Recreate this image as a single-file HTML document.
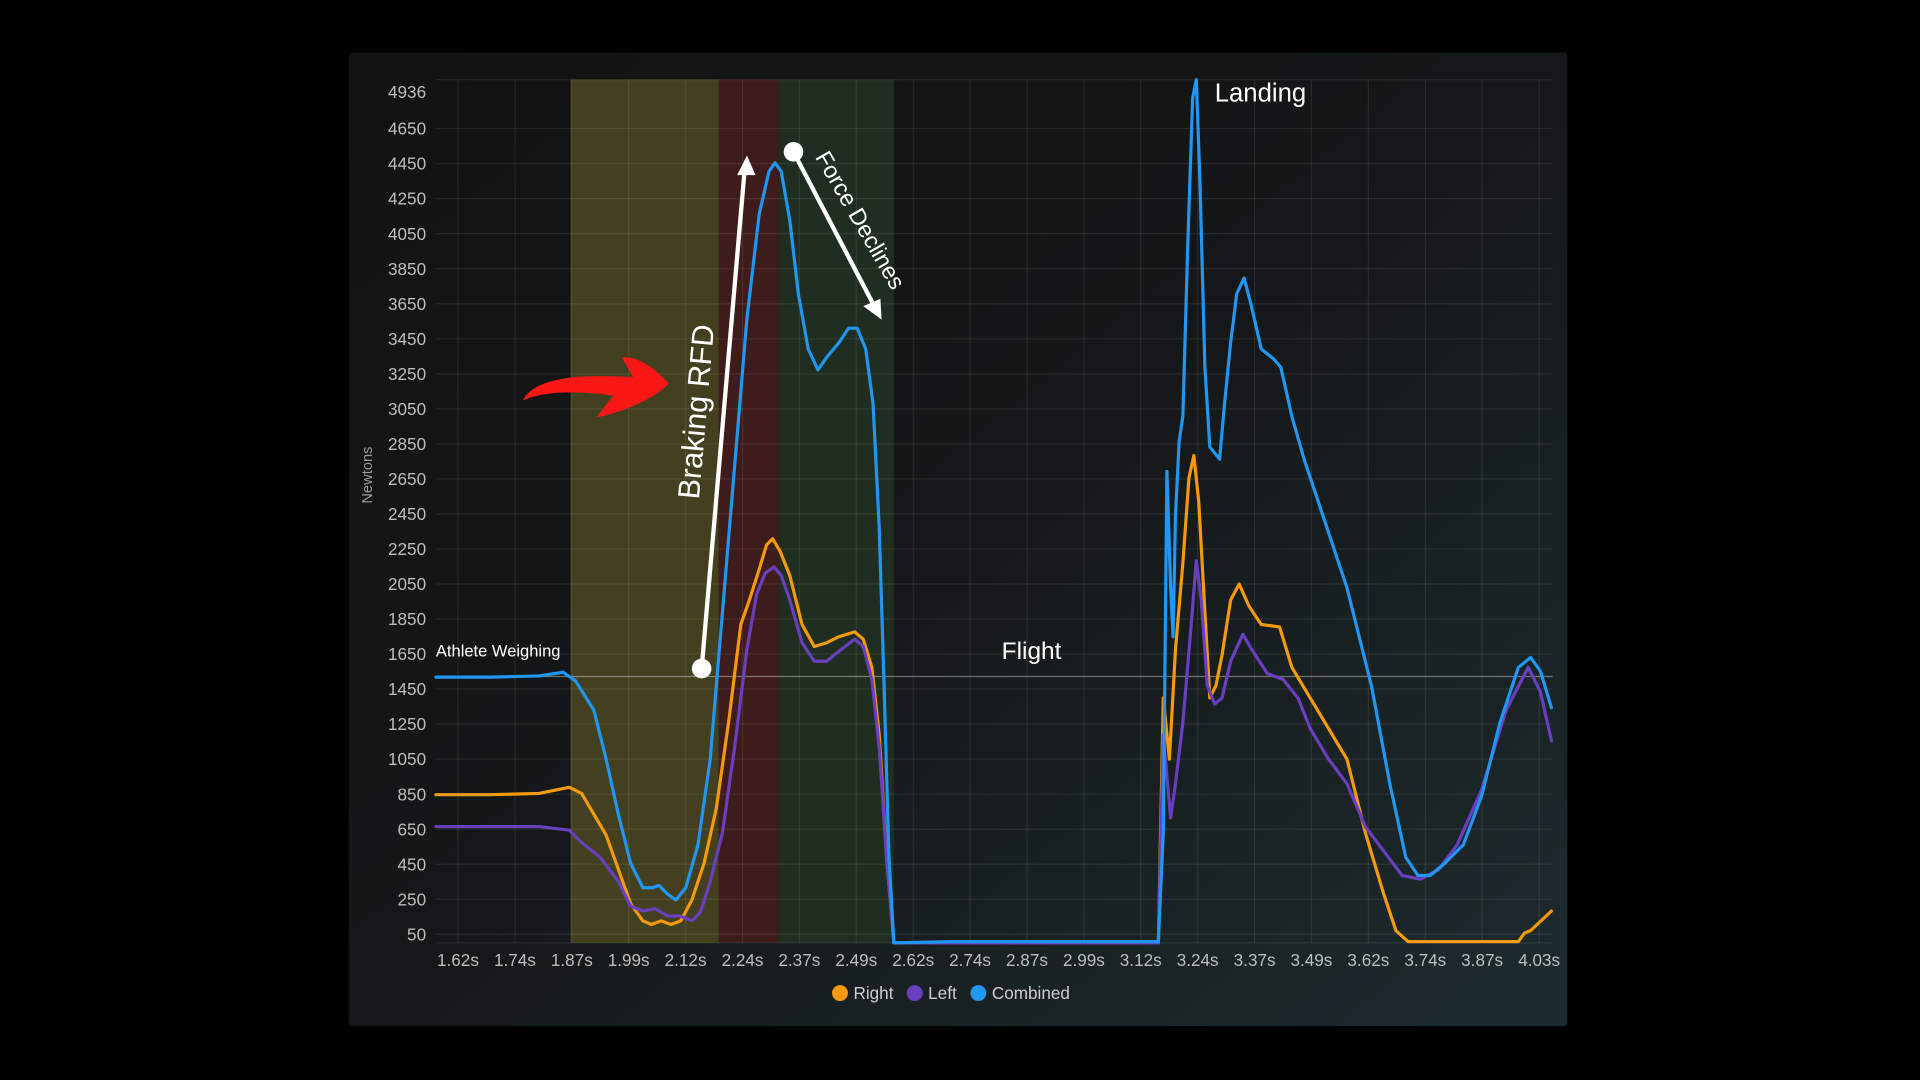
<!DOCTYPE html>
<html><head><meta charset="utf-8"><style>
html,body{margin:0;padding:0;background:#000;width:1920px;height:1080px;overflow:hidden}
svg{display:block}
text{font-family:"Liberation Sans",sans-serif}
</style></head><body>
<svg width="1920" height="1080" viewBox="0 0 1568 882" preserveAspectRatio="none" xmlns="http://www.w3.org/2000/svg">
<defs>
<linearGradient id="bg" x1="0" y1="0" x2="1" y2="1">
<stop offset="0" stop-color="#121212"/><stop offset="0.5" stop-color="#151818"/><stop offset="1" stop-color="#1d2b2f"/>
</linearGradient>
</defs>
<rect x="0" y="0" width="1568" height="882" fill="#000"/>
<rect x="285" y="43" width="995" height="795" rx="3" fill="url(#bg)"/>
<!-- bands -->
<rect x="466" y="65" width="121" height="705" fill="#43401f"/>
<rect x="587" y="65" width="49" height="705" fill="#3f1c1c"/>
<rect x="636" y="65" width="94" height="705" fill="#1f2e20"/>
<!-- grid -->
<g stroke="rgba(255,255,255,0.08)" stroke-width="1">
<line x1="356" y1="65" x2="1268" y2="65"/>
<line x1="356" y1="105" x2="1268" y2="105"/><line x1="356" y1="133.6" x2="1268" y2="133.6"/><line x1="356" y1="162.2" x2="1268" y2="162.2"/><line x1="356" y1="190.8" x2="1268" y2="190.8"/><line x1="356" y1="219.4" x2="1268" y2="219.4"/><line x1="356" y1="248.1" x2="1268" y2="248.1"/><line x1="356" y1="276.7" x2="1268" y2="276.7"/><line x1="356" y1="305.3" x2="1268" y2="305.3"/><line x1="356" y1="333.9" x2="1268" y2="333.9"/><line x1="356" y1="362.5" x2="1268" y2="362.5"/><line x1="356" y1="391.1" x2="1268" y2="391.1"/><line x1="356" y1="419.7" x2="1268" y2="419.7"/><line x1="356" y1="448.3" x2="1268" y2="448.3"/><line x1="356" y1="476.9" x2="1268" y2="476.9"/><line x1="356" y1="505.5" x2="1268" y2="505.5"/><line x1="356" y1="534.1" x2="1268" y2="534.1"/><line x1="356" y1="562.7" x2="1268" y2="562.7"/><line x1="356" y1="591.3" x2="1268" y2="591.3"/><line x1="356" y1="619.9" x2="1268" y2="619.9"/><line x1="356" y1="648.6" x2="1268" y2="648.6"/><line x1="356" y1="677.2" x2="1268" y2="677.2"/><line x1="356" y1="705.8" x2="1268" y2="705.8"/><line x1="356" y1="734.4" x2="1268" y2="734.4"/><line x1="356" y1="763" x2="1268" y2="763"/><line x1="356" y1="770" x2="1268" y2="770"/>
<line x1="374" y1="65" x2="374" y2="770"/><line x1="420.5" y1="65" x2="420.5" y2="770"/><line x1="467" y1="65" x2="467" y2="770"/><line x1="513.4" y1="65" x2="513.4" y2="770"/><line x1="559.9" y1="65" x2="559.9" y2="770"/><line x1="606.4" y1="65" x2="606.4" y2="770"/><line x1="652.8" y1="65" x2="652.8" y2="770"/><line x1="699.3" y1="65" x2="699.3" y2="770"/><line x1="745.8" y1="65" x2="745.8" y2="770"/><line x1="792.2" y1="65" x2="792.2" y2="770"/><line x1="838.7" y1="65" x2="838.7" y2="770"/><line x1="885.2" y1="65" x2="885.2" y2="770"/><line x1="931.6" y1="65" x2="931.6" y2="770"/><line x1="978.1" y1="65" x2="978.1" y2="770"/><line x1="1024.6" y1="65" x2="1024.6" y2="770"/><line x1="1071" y1="65" x2="1071" y2="770"/><line x1="1117.5" y1="65" x2="1117.5" y2="770"/><line x1="1164" y1="65" x2="1164" y2="770"/><line x1="1210.4" y1="65" x2="1210.4" y2="770"/><line x1="1257" y1="65" x2="1257" y2="770"/>
</g>
<!-- y labels -->
<g fill="#bdbdbd" font-size="14" text-anchor="end">
<text x="348" y="80">4936</text><text x="348" y="110">4650</text><text x="348" y="138.6">4450</text><text x="348" y="167.2">4250</text><text x="348" y="195.8">4050</text><text x="348" y="224.4">3850</text><text x="348" y="253.1">3650</text><text x="348" y="281.7">3450</text><text x="348" y="310.3">3250</text><text x="348" y="338.9">3050</text><text x="348" y="367.5">2850</text><text x="348" y="396.1">2650</text><text x="348" y="424.7">2450</text><text x="348" y="453.3">2250</text><text x="348" y="481.9">2050</text><text x="348" y="510.5">1850</text><text x="348" y="539.1">1650</text><text x="348" y="567.7">1450</text><text x="348" y="596.3">1250</text><text x="348" y="624.9">1050</text><text x="348" y="653.6">850</text><text x="348" y="682.2">650</text><text x="348" y="710.8">450</text><text x="348" y="739.4">250</text><text x="348" y="768">50</text>
</g>
<text x="0" y="0" fill="#9a9a9a" font-size="12" text-anchor="middle" transform="translate(304,388) rotate(-90)">Newtons</text>
<!-- x labels -->
<g fill="#bdbdbd" font-size="14" text-anchor="middle">
<text x="374" y="789">1.62s</text><text x="420.5" y="789">1.74s</text><text x="467" y="789">1.87s</text><text x="513.4" y="789">1.99s</text><text x="559.9" y="789">2.12s</text><text x="606.4" y="789">2.24s</text><text x="652.8" y="789">2.37s</text><text x="699.3" y="789">2.49s</text><text x="745.8" y="789">2.62s</text><text x="792.2" y="789">2.74s</text><text x="838.7" y="789">2.87s</text><text x="885.2" y="789">2.99s</text><text x="931.6" y="789">3.12s</text><text x="978.1" y="789">3.24s</text><text x="1024.6" y="789">3.37s</text><text x="1071" y="789">3.49s</text><text x="1117.5" y="789">3.62s</text><text x="1164" y="789">3.74s</text><text x="1210.4" y="789">3.87s</text><text x="1257" y="789">4.03s</text>
</g>
<!-- weighing line -->
<line x1="356" y1="552.5" x2="1268" y2="552.5" stroke="rgba(220,220,220,0.45)" stroke-width="1"/>
<g fill="none" stroke-width="2.6" stroke-linejoin="round" stroke-linecap="round">
<polyline stroke="#f59a0c" points="356,649 400,649 440,648 465,643 475,648 485,665 495,682 505,710 515,738 525,752 532,755 540,752 548,755 556,752 565,735 575,705 585,660 595,590 605,510 612,490 620,465 626,445 631,440 637,450 645,470 655,510 665,528 675,525 685,520 698,516 705,522 712,545 718,600 724,700 730,770 946,770 950,570 955,620 960,530 966,460 971,390 975,372 979,410 984,500 988,570 993,560 998,535 1005,490 1012,477 1020,495 1030,510 1045,512 1055,545 1070,570 1085,595 1100,620 1115,680 1130,730 1140,760 1150,769 1240,769 1245,762 1250,760 1267,744"/>
<polyline stroke="#6a3fbf" points="356,675 440,675 465,678 475,688 490,700 505,720 515,740 525,744 535,742 545,748 555,748 565,752 572,745 580,720 590,680 600,610 610,530 618,485 625,468 632,463 638,470 645,490 655,525 665,540 675,540 685,532 698,522 705,528 712,555 718,610 724,700 730,770 946,770 950,600 956,668 960,640 966,590 972,520 977,458 981,490 986,560 992,575 998,570 1005,540 1015,518 1022,530 1035,550 1048,555 1060,570 1070,595 1085,620 1100,640 1115,675 1130,695 1145,715 1160,718 1175,710 1190,690 1210,645 1230,580 1248,545 1258,565 1267,605"/>
<polyline stroke="#2196f3" points="356,553 400,553 440,552 460,549 470,556 485,580 495,620 505,665 515,705 525,725 533,725 538,723 545,730 552,735 560,725 570,690 580,620 590,500 600,380 610,260 620,175 628,140 633,133 638,140 645,180 652,240 660,285 668,302 675,292 685,280 693,268 700,268 707,285 713,330 718,430 722,560 726,700 730,770 780,769 900,769 946,769 950,680 953,385 956,480 958,520 960,420 963,360 966,340 970,200 974,80 977,65 980,150 984,300 988,365 992,370 996,375 1000,330 1005,280 1010,240 1016,227 1022,250 1030,285 1040,293 1046,300 1055,340 1065,375 1080,420 1100,480 1120,560 1135,640 1148,700 1158,715 1168,715 1180,705 1195,690 1210,650 1225,590 1240,545 1250,537 1258,548 1267,578"/>
</g>
<!-- annotations -->
<line x1="573" y1="546" x2="608" y2="140" stroke="#fff" stroke-width="3.5"/>
<polygon points="610,127 602,143 617,143" fill="#fff"/>
<circle cx="573" cy="546" r="8" fill="#fff"/>
<line x1="648" y1="124" x2="714" y2="250" stroke="#fff" stroke-width="3.5"/>
<polygon points="720,261 705,250 719,244" fill="#fff"/>
<circle cx="648" cy="124" r="8" fill="#fff"/>
<text fill="#fff" font-size="25" text-anchor="middle" transform="translate(577,337) rotate(-85)">Braking RFD</text>
<text fill="#fff" font-size="19" text-anchor="middle" transform="translate(697,183) rotate(60)">Force Declines</text>
<path d="M427,327 C438,306 480,306 517,308 L508,292 C522,290 538,304 546,313 C540,322 512,336 487,341 L501,323 C478,320 447,318 427,327 Z" fill="#fc1717"/>
<text x="992" y="83" fill="#fff" font-size="21">Landing</text>
<text x="818" y="538" fill="#fff" font-size="20">Flight</text>
<text x="356" y="536" fill="#fff" font-size="13.5">Athlete Weighing</text>
<!-- legend -->
<circle cx="686" cy="811" r="6.5" fill="#f59a0c"/><text x="697" y="816" fill="#cfcfcf" font-size="14">Right</text>
<circle cx="747" cy="811" r="6.5" fill="#6a3fbf"/><text x="758" y="816" fill="#cfcfcf" font-size="14">Left</text>
<circle cx="799" cy="811" r="6.5" fill="#2196f3"/><text x="810" y="816" fill="#cfcfcf" font-size="14">Combined</text>
</svg>
</body></html>
